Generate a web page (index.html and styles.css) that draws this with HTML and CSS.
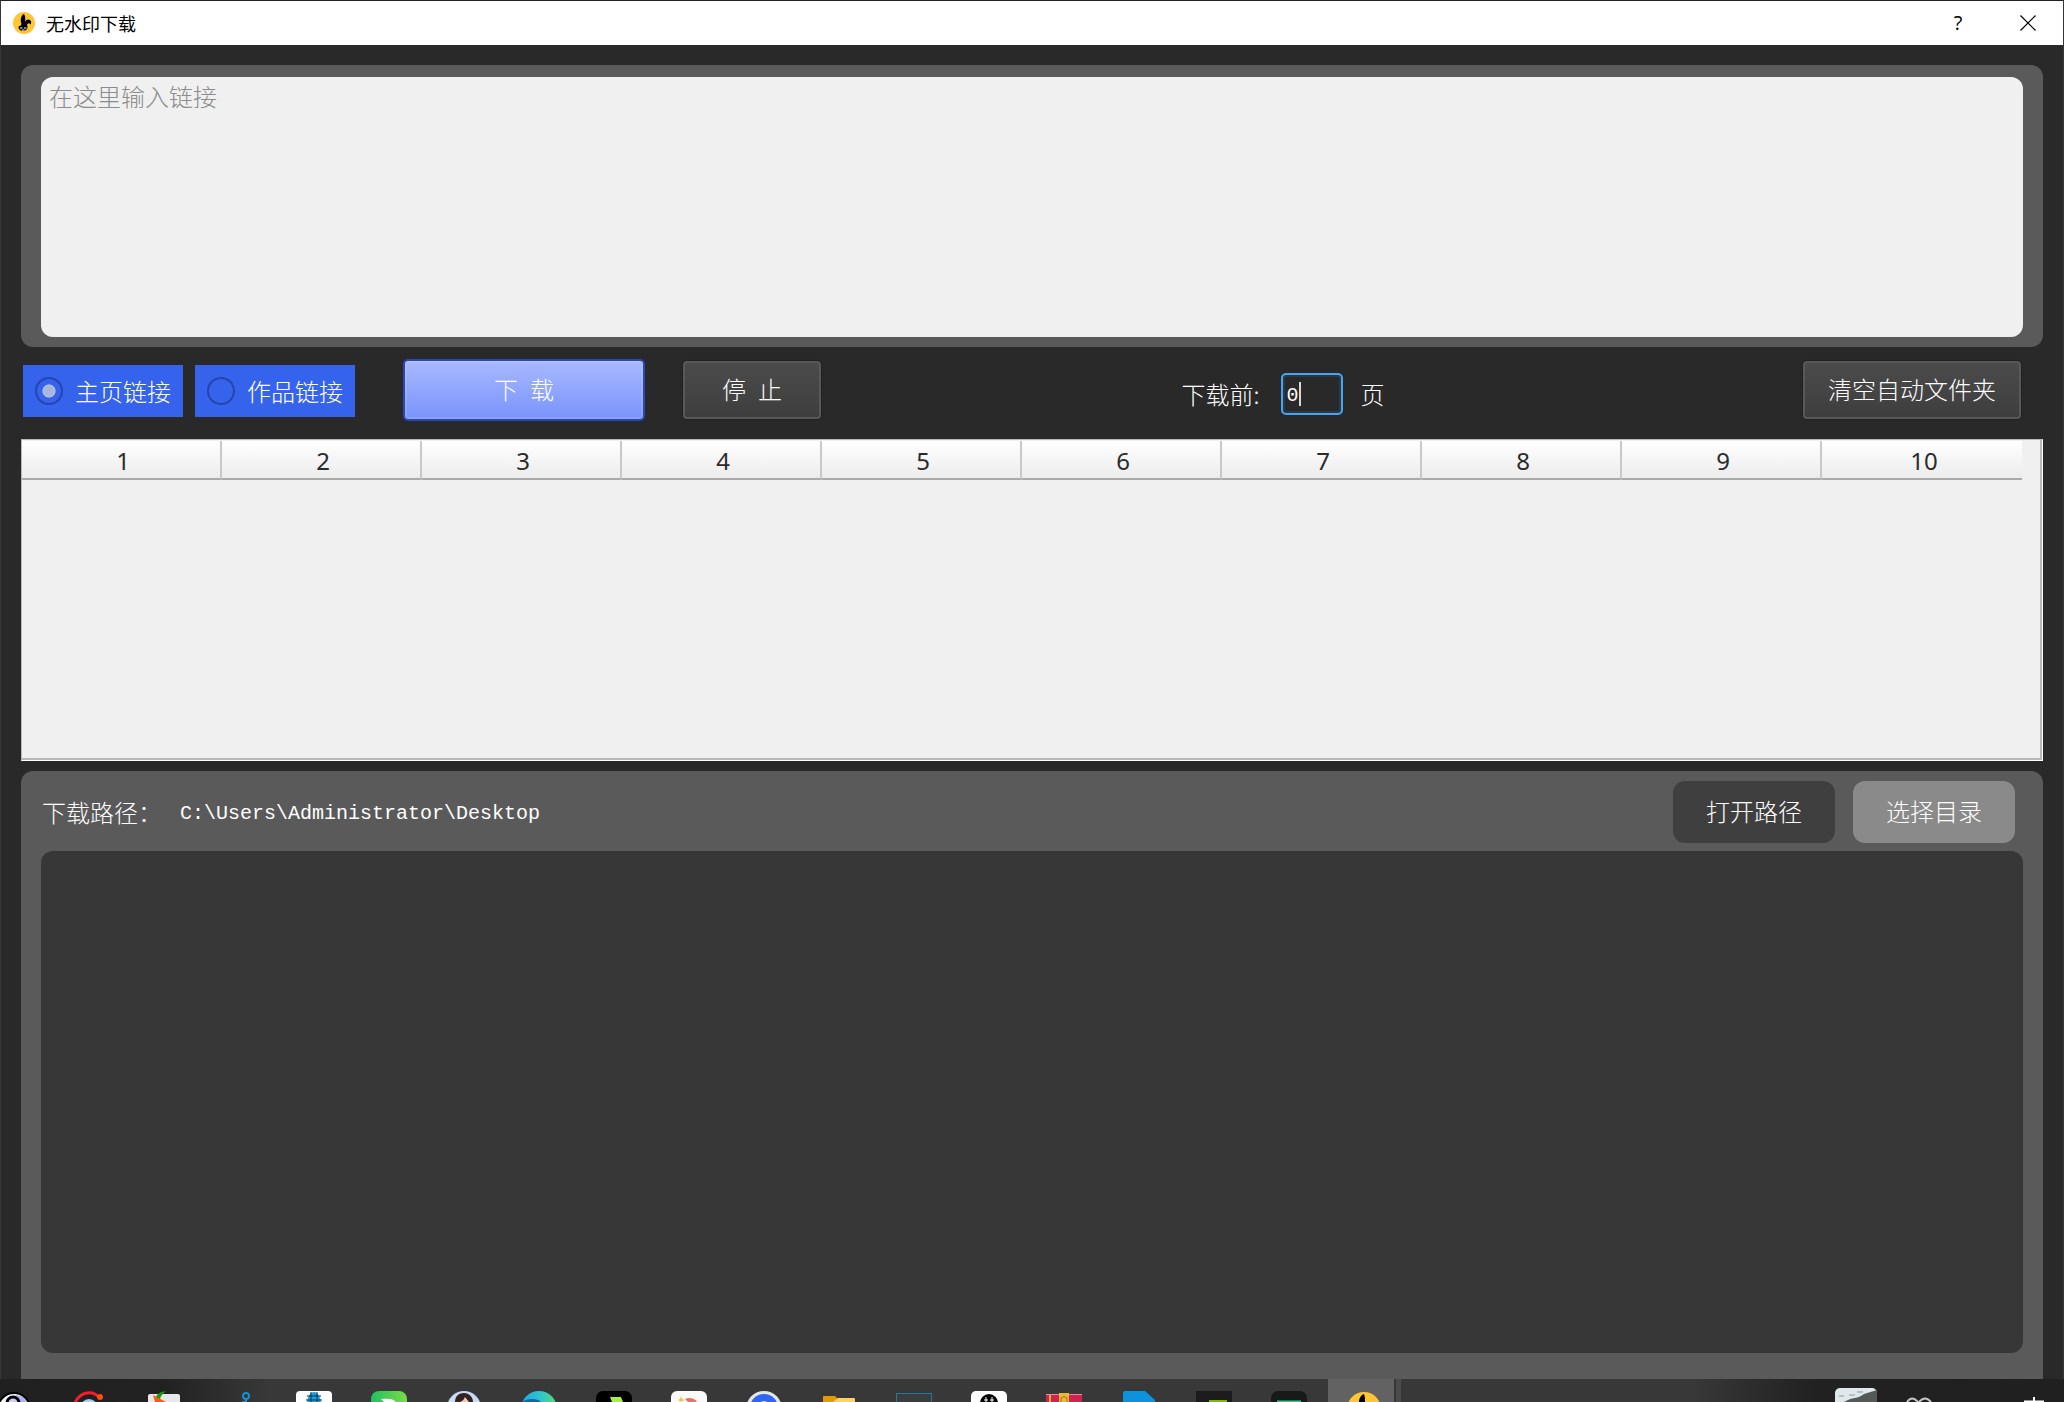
FILE: index.html
```html
<!DOCTYPE html>
<html lang="zh-CN">
<head>
<meta charset="utf-8">
<title>无水印下载</title>
<link rel="stylesheet" href="styles.css">
</head>
<body>
<div class="window">
  <header class="titlebar">
    <svg class="app-icon" viewBox="0 0 22 22" aria-hidden="true">
      <circle cx="11" cy="11" r="11" fill="#ffc534"/>
      <path d="M8.500 12C7 8 8 3 11 2c2 3 1.200 6 .8 8.500C12.500 8 15 6.500 17 8c1.500 1.200 1.500 3 .5 4.500L16 11l-2 1.500.5 2H7z"/>
      <path d="M6 14h8c1.500 2-1 5-4 5s-5.500-3-4-5z"/>
      <path d="M7 16h2.500M11 16h2.500M9 18h2.500" stroke="#fff" stroke-width="1.200"/>
    </svg>
    <h1 class="title">无水印下载</h1>
    <button class="title-button" type="button" aria-label="帮助">?</button>
    <button class="title-button" type="button" aria-label="关闭">
      <svg width="16" height="16" viewBox="0 0 16 16"><path d="M.5.5l15 15M15.500.5l-15 15" stroke="#000" stroke-width="1.200" fill="none"/></svg>
    </button>
  </header>

  <main class="content">
    <section class="panel link-panel">
      <textarea class="link-input" aria-label="链接" placeholder="在这里输入链接"></textarea>
    </section>

    <form class="toolbar">
      <label class="mode"><input type="radio" name="mode" checked>主页链接</label>
      <label class="mode"><input type="radio" name="mode">作品链接</label>
      <button class="button primary" type="button">下&ensp;载</button>
      <button class="button stop" type="button">停&ensp;止</button>
      <div class="pages">
        <label class="pages-label" for="pages">下载前:</label>
        <input class="pages-input" id="pages" type="text" value="0">
        <span>页</span>
      </div>
      <button class="button clear" type="button">清空自动文件夹</button>
    </form>

    <section class="results">
      <table class="results-table">
        <thead>
          <tr><th>1</th><th>2</th><th>3</th><th>4</th><th>5</th><th>6</th><th>7</th><th>8</th><th>9</th><th>10</th></tr>
        </thead>
      </table>
    </section>

    <section class="panel path-panel">
      <div class="path-row">
        <span>下载路径：</span>
        <span class="path">C:\Users\Administrator\Desktop</span>
        <button class="path-button" type="button">打开路径</button>
        <button class="path-button light" type="button">选择目录</button>
      </div>
      <div class="log"></div>
    </section>
  </main>
</div>

<footer class="taskbar">
  <div class="task"><svg viewBox="0 0 36 11"><circle cx="18" cy="18" r="17" fill="#000"/><circle cx="18" cy="18" r="15" fill="#f4f5ff"/><path d="M20 4a14 14 0 0 1 11 7H22z" fill="#aab4ee"/><circle cx="17" cy="12" r="6" fill="#c9cef5" stroke="#000" stroke-width="3"/></svg></div>
  <div class="task"><svg viewBox="0 0 36 11"><path d="M4 12C8 2 20-2 28 6" fill="none" stroke="#f0202a" stroke-width="3"/><circle cx="29" cy="6" r="3" fill="#ff4a10"/><circle cx="18" cy="17" r="9" fill="#9fd0f0"/></svg></div>
  <div class="task"><svg viewBox="0 0 36 11"><rect x="2" y="3" width="32" height="20" rx="2" fill="#e8e8e8"/><path d="M7 4l13 7H9z" fill="#ff5a14"/><path d="M20 0c-6 1-9 3-10 6l4 2c1-4 3-5 6-8z" fill="#1f9a10"/></svg></div>
  <div class="task"><svg viewBox="0 0 36 11"><circle cx="25" cy="5" r="3" fill="none" stroke="#1590d0" stroke-width="2"/><path d="M25 8v3h-4" fill="none" stroke="#1590d0" stroke-width="2"/></svg></div>
  <div class="task"><svg viewBox="0 0 36 11"><rect width="36" height="36" rx="4" fill="#fff"/><ellipse cx="18" cy="13" rx="7" ry="12" fill="#22a0dd"/><path d="M11 5h14M10 9h16M15 1v10M21 1v10" stroke="#0b3550"/></svg></div>
  <div class="task"><svg viewBox="0 0 36 11"><defs><linearGradient id="green"><stop stop-color="#22c060"/><stop offset="1" stop-color="#7bdc48"/></linearGradient></defs><rect width="36" height="36" rx="8" fill="url(#green)"/><path d="M10 8c7-1 13 0 15 3H13z" fill="#fff"/></svg></div>
  <div class="task"><svg viewBox="0 0 36 11"><circle cx="18" cy="17" r="17" fill="#c6dcf5"/><path d="M9 11c0-6 4-9 9-9s9 4 9 9z" fill="#35221f"/><path d="M14 11c3-1 4-3 5-5l4 5z" fill="#efc9b8"/></svg></div>
  <div class="task"><svg viewBox="0 0 36 11"><defs><linearGradient id="edge"><stop stop-color="#22a8e0"/><stop offset=".6" stop-color="#30c8c8"/><stop offset="1" stop-color="#58e068"/></linearGradient></defs><circle cx="18" cy="18" r="18" fill="url(#edge)"/><path d="M1 11C6 7 17 7 20 11z" fill="#0b68ad"/></svg></div>
  <div class="task"><svg viewBox="0 0 36 11"><rect width="36" height="36" rx="7" fill="#000"/><path d="M14 6h11l2 5H16z" fill="#a8f040"/></svg></div>
  <div class="task"><svg viewBox="0 0 36 11"><rect width="36" height="36" rx="6" fill="#fafafa"/><path d="M14 8c4-2 10-1 12 3h-9z" fill="#e57363"/><path d="M10 5l1 3 3 1-3 1-1 1-1-1-2-1 2-1z" fill="#f1c232"/></svg></div>
  <div class="task"><svg viewBox="0 0 36 11"><circle cx="18" cy="18" r="18" fill="#e4e6e8"/><circle cx="18" cy="17" r="14" fill="#2f66f5"/><path d="M15 11c1-1 5-1 6 0z" fill="#fff"/></svg></div>
  <div class="task"><svg viewBox="0 0 36 11"><path d="M2 11V6q0-1 1-1h11l3 3v3z" fill="#e19b04"/><path d="M12 11l5-4h16q1 0 1 1v3z" fill="#ffd35c"/></svg></div>
  <div class="task"><svg viewBox="0 0 36 11"><rect x=".5" y="2.500" width="35" height="30" fill="#3a3d3f" stroke="#23789a"/></svg></div>
  <div class="task"><svg viewBox="0 0 36 11"><rect width="36" height="36" rx="5" fill="#fff"/><circle cx="18" cy="12" r="9" fill="#000"/><path d="M15 6v5M21 6v5M13 9h4M19 9h4" stroke="#fff"/></svg></div>
  <div class="task"><svg viewBox="0 0 36 11"><rect y="3" width="36" height="8" fill="#cf2450"/><path d="M0 3.500h36" stroke="#f584a4"/><path d="M4 4v7" stroke="#f5b02c" stroke-width="2"/><rect x="13" y="2" width="10" height="9" fill="#e9b93a"/><path d="M15 11V7q3-3 6 0v4" fill="none" stroke="#ab6d10"/></svg></div>
  <div class="task"><svg viewBox="0 0 36 11"><path d="M2 11V2q0-2 2-2h20l10 9v2z" fill="#0d93de"/></svg></div>
  <div class="task"><svg viewBox="0 0 36 11"><rect width="36" height="11" fill="#1c1c1c"/><rect x="13" y="9" width="18" height="2" fill="#80b800"/></svg></div>
  <div class="task"><svg viewBox="0 0 36 11"><rect width="36" height="36" rx="7" fill="#17191a"/><path d="M6 10.500h24" stroke="#38c987" stroke-width="2"/></svg></div>
  <div class="task active"><svg viewBox="0 0 36 11"><circle cx="18" cy="18" r="17" fill="#ffc534"/><path d="M13 11c0-4 2-7 5-8 1 3 1 5 1 8z"/></svg></div>
  <div class="tray">
    <svg width="42" height="14" viewBox="0 0 42 14"><rect width="42" height="30" rx="5" fill="#dfe8ea"/><path d="M9 14c8-5 14-3 20-8l13-4v12z" fill="#555a58"/><path d="M4 8h5M14 7h6M22 4h6" stroke="#8c9698"/></svg>
    <svg width="28" height="5" viewBox="0 0 28 5"><path d="M2 5q5-7 11 0M14 5q6-7 12 0" fill="none" stroke="#c4c4c4" stroke-width="2"/></svg>
    <svg width="20" height="5" viewBox="0 0 20 5"><path d="M10 0v5M0 4.500h20" stroke="#fff" stroke-width="2"/></svg>
  </div>
</footer>
</body>
</html>
```
FILE: styles.css
```css
* {
  box-sizing: border-box;
}

body {
  margin: 0;
  min-height: 100vh;
  display: flex;
  flex-direction: column;
  background: #292929;
  color: #fff;
  font: 300 24px/24px "Noto Sans CJK SC", sans-serif;
}

button,
input,
textarea {
  font: inherit;
  color: inherit;
  margin: 0;
}

button {
  padding: 0;
  white-space: nowrap;
}

.window {
  flex: 1;
  display: flex;
  flex-direction: column;
  border: 1px solid #34363a;
  border-top-color: #241f2c;
  border-bottom: 0;
}

.titlebar {
  display: flex;
  align-items: center;
  height: 44px;
  padding-left: 12px;
  background: #fff;
  color: #000;
}

.app-icon {
  width: 22px;
  height: 22px;
}

.title {
  flex: 1;
  margin: 0 0 0 11px;
  font-size: 18px;
  line-height: 22px;
  font-weight: 400;
}

.title-button {
  display: flex;
  align-items: center;
  justify-content: center;
  width: 70px;
  height: 44px;
  border: 0;
  background: none;
  font: 400 20px/24px "Open Sans", sans-serif;
}

.content {
  flex: 1;
  display: flex;
  flex-direction: column;
  padding: 20px 20px 0;
}

.panel {
  background: #5a5a5a;
  border-radius: 12px;
  padding: 12px 20px 10px;
}

.link-panel {
  display: flex;
}

.link-input {
  flex: 1;
  height: 260px;
  padding: 7px 8px;
  border: 0;
  border-radius: 12px;
  outline: 0;
  resize: none;
  background: #f0f0f0;
  color: #222;
}

.link-input::placeholder {
  color: #8c8c8c;
  opacity: 1;
}

.toolbar {
  display: flex;
  align-items: center;
  height: 92px;
  padding: 0 22px 6px 2px;
}

.mode {
  display: flex;
  align-items: center;
  gap: 12px;
  width: 160px;
  height: 52px;
  margin: 2px 12px 0 0;
  padding-left: 12px;
  line-height: 22px;
  background: #3663ec;
}

.mode input {
  appearance: none;
  width: 28px;
  height: 28px;
  border: 2px solid #2446ae;
  border-radius: 50%;
}

.mode input:checked {
  background: radial-gradient(circle, #aab6dc 5px, #bcc5e0 6px, transparent 7px);
}

.button {
  height: 58px;
  padding-bottom: 2px;
  border: 2px solid #585858;
  border-radius: 4px;
  background: linear-gradient(#4b4b4b, #3e3e3e);
  box-shadow: 0 0 1px 1px #222;
}

.primary {
  width: 242px;
  height: 62px;
  margin: 0 38px 0 36px;
  border-color: #2c47b0;
  border-radius: 5px;
  background: linear-gradient(#a8b8ff, #7993fb);
  box-shadow: inset 0 0 0 2px rgba(255, 255, 255, 0.12);
}

.stop {
  width: 138px;
}

.clear {
  width: 218px;
}

.pages {
  flex: 1;
  display: flex;
  align-items: center;
  justify-content: center;
  gap: 18px;
  padding: 8px 58px 0 0;
}

.pages-label {
  width: 81px;
}

.pages-input {
  width: 62px;
  height: 42px;
  padding: 2px 4px 0;
  border: 2px solid #42a5f5;
  border-radius: 5px;
  outline: 0;
  background: linear-gradient(#d8d8d8, #d8d8d8) 16px center / 2px 24px no-repeat;
  box-shadow: inset 0 0 0 2px #2c3945;
  font: 400 20px/24px "Liberation Mono", monospace;
}

.results {
  height: 322px;
  background: #f0f0f0;
  border: 1px solid #b8b8b8;
  border-right-color: #fff;
  border-bottom-color: #fff;
  box-shadow: inset -2px -2px #b8b8b8;
  padding: 1px 20px 0 0;
}

.results-table {
  width: 100%;
  table-layout: fixed;
  border-collapse: separate;
  border-spacing: 0;
  background: linear-gradient(#fff, #ebebeb);
  color: #2b2b2b;
}

.results-table th {
  height: 39px;
  padding: 2px 0 0 4px;
  border-right: 2px solid #c8c8c8;
  border-bottom: 2px solid #a9a9a9;
  font: 400 24px/24px "Noto Sans", sans-serif;
}

.results-table th:last-child {
  border-right: 0;
}

.path-panel {
  flex: 1;
  display: flex;
  flex-direction: column;
  gap: 8px;
  margin-top: 10px;
  padding: 10px 20px 26px;
  border-radius: 12px 12px 0 0;
}

.path-row {
  display: flex;
  align-items: center;
  gap: 18px;
  padding: 0 8px 0 1px;
}

.path {
  flex: 1;
  padding-top: 4px;
  font: 400 20px/24px "Liberation Mono", monospace;
}

.path-button {
  width: 162px;
  height: 62px;
  padding-bottom: 2px;
  border: 0;
  border-radius: 12px;
  background: #3f3f3f;
}

.path-button.light {
  background: #8a8a8a;
}

.log {
  flex: 1;
  border-radius: 12px;
  background: #373737;
}

.taskbar {
  display: flex;
  align-items: flex-end;
  height: 23px;
  overflow: hidden;
  background: linear-gradient(90deg, #202020, #222 8%, #383838 13%, #383838 82%, #212121 88%, #202020);
}

.task {
  flex: none;
  display: flex;
  align-items: flex-end;
  justify-content: center;
  width: 75px;
  height: 23px;
}

.task:first-child {
  margin-left: -24px;
}

.task svg {
  width: 36px;
  height: 11px;
}

.task.active {
  background: linear-gradient(90deg, transparent 2px, #626262 2px, #626262 68px, #383838 68px, #383838 70px, #4c4c4c 70px);
}

.tray {
  display: flex;
  align-items: flex-end;
  margin-left: auto;
  padding-right: 20px;
}

.tray svg {
  margin-left: 28px;
}

.tray svg:last-child {
  margin-left: 91px;
}
```
